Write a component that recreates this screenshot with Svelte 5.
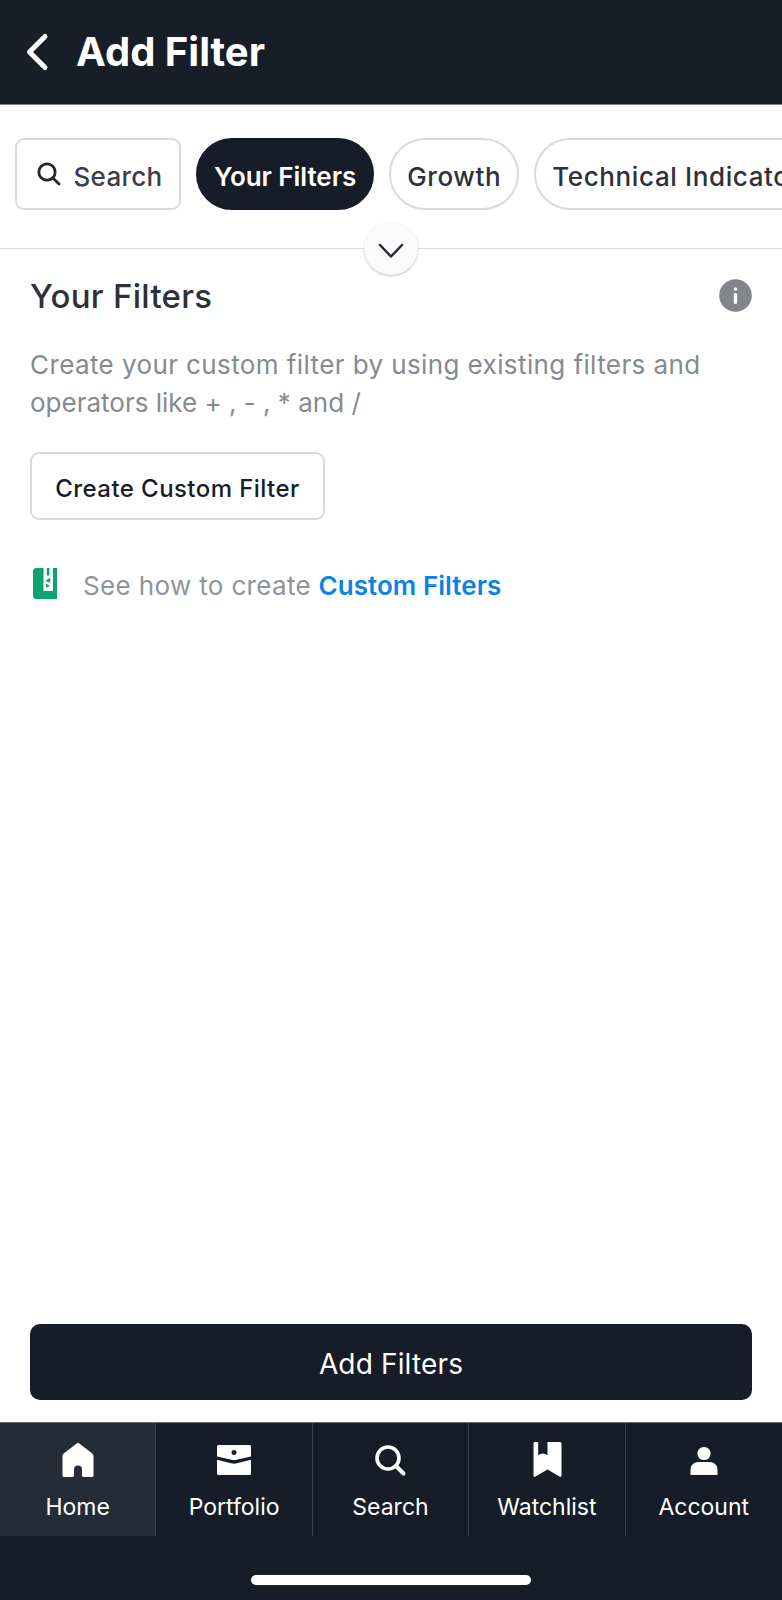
<script>
  let activeFilter = 'Your Filters', activeTab = 'Home';
  const filters = ['Your Filters', 'Growth', 'Technical Indicators'];
  const tabs = ['Home', 'Portfolio', 'Search', 'Watchlist', 'Account'];
</script>

<main class="screen">
  <header class="header">
    <svg class="back" width="24" height="40" viewBox="0 0 24 40"><path d="M20 4.500 4.500 20 20 35.500" /></svg>
    <h1>Add Filter</h1>
  </header>

  <div class="filter-bar">
    <button class="search">
      <svg width="24" height="24" viewBox="0 0 24 24"><circle cx="10" cy="10" r="8.200" /><path d="m16 16 6 6" /></svg>
      <span>Search</span>
    </button>
    {#each filters as name}
      <button class="chip" class:selected={name === activeFilter} on:click={() => activeFilter = name}>
        <span>{name}</span>
      </button>
    {/each}
    <button class="expand" aria-label="Show all filters">
      <svg width="28" height="18" viewBox="0 0 28 18"><path d="m3 3 11 11.500L25 3" /></svg>
    </button>
  </div>

  <section class="content">
    <div class="heading">
      <h2>Your Filters</h2>
      <svg width="33" height="33" viewBox="0 0 33 33">
        <circle cx="16.500" cy="16.500" r="16.300" fill="#82868c" />
        <circle cx="16.500" cy="10" r="1.700" fill="#fff" />
        <rect x="14.800" y="14" width="3.400" height="11" rx="1.600" fill="#fff" />
      </svg>
    </div>
    <p class="description"><span class="wide">Create your custom filter by using existing filters and</span><br />operators like + , - , * and /</p>
    <button class="create"><span>Create Custom Filter</span></button>
    <div class="help">
      <svg width="24" height="31" viewBox="0 0 24 31">
        <path fill="#09a56d" d="M3.500 0H10.500v23h9.500V0h4v31H3.500Q0 31 0 27.500v-24Q0 0 3.500 0Z" />
        <path fill="#09a56d" d="M13.800 0h2.600v7.500H13.800ZM17.200 9.500v5.300L12.300 13ZM12.800 15.500l4.200 2.200-3.700 2.300Z" />
      </svg>
      <p><span class="see">See how to create</span> <a href="#custom">Custom Filters</a></p>
    </div>
  </section>

  <div class="submit">
    <button><span>Add Filters</span></button>
  </div>

  <nav>
    {#each tabs as tab}
      <button class="tab" class:current={tab === activeTab} on:click={() => activeTab = tab}>
        <svg width="36" height="36" viewBox="0 0 36 36">
          {#if tab === 'Home'}
            <path d="M17 1.300q1-.8 2 0L32.300 11.600q1.200 1 1.200 2.500V33.500q0 1.500-1.500 1.500H23.500q-1.500 0-1.500-1.500V27.500q0-4-4-4t-4 4V33.500q0 1.500-1.500 1.500H4q-1.500 0-1.500-1.500V14.100q0-1.500 1.200-2.500Z" />
          {:else if tab === 'Portfolio'}
            <path fill-rule="evenodd" d="M2.500 3H33.500q1.500 0 1.500 1.500V14.500L20.500 17.800q-2.500.6-5 0L1 14.500V4.500Q1 3 2.500 3ZM18 8a2.500 2.500 0 1 0 0 5a2.500 2.500 0 1 0 0-5Z" />
            <path d="M1 17.800 15 21.300q3 .7 6 0L35 17.800V31.500q0 1.500-1.500 1.500H2.500Q1 33 1 31.500Z" />
          {:else if tab === 'Search'}
            <circle cx="16" cy="16" r="11" fill="none" stroke="#fff" stroke-width="3.600" />
            <path d="m24 24 7.500 7.500" fill="none" stroke="#fff" stroke-width="4" stroke-linecap="round" />
          {:else if tab === 'Watchlist'}
            <path d="M5.500 0H9.200V13.200q4.500-3.500 9.300 0V0H31Q32.500 0 32.500 1.500V33.500q0 2.200-2 1.100L18.500 27.500 6.500 34.600Q4.500 35.700 4.500 33.500V1.500Q4.500 0 5.500 0Z" />
          {:else}
            <circle cx="18" cy="11.500" r="6.600" />
            <path d="M4.500 33V28.500q0-8.500 8.500-8.500H23q8.500 0 8.500 8.500V33Z" />
          {/if}
        </svg>
        <span>{tab}</span>
      </button>
    {/each}
  </nav>
  <footer><div class="home-indicator"></div></footer>
</main>

<style>
  :global(body) { margin:0; background:#fff; }
  * { box-sizing:border-box; }
  .screen { display:flex; flex-direction:column; height:1600px; width:782px; overflow:hidden; background:#fff; font-family:Inter, sans-serif; color:#2c313a; }
  button { font:inherit; color:inherit; padding:0; margin:0; border:0; background:none; white-space:nowrap; display:flex; align-items:center; justify-content:center; flex:none; }
  svg { display:block; flex:none; }
  h1, h2, p { margin:0; }
  .header { height:105px; flex:none; display:flex; align-items:center; gap:27px; padding:0 0 1px 25px; background:#181e28; border-bottom:1px solid #7d8087; color:#fff; }
  .back path { fill:none; stroke:#fff; stroke-width:5; stroke-linecap:round; stroke-linejoin:round; }
  h1 { font-size:40px; line-height:48px; font-weight:700; letter-spacing:0; white-space:nowrap; }
  .filter-bar { position:relative; height:144px; flex:none; display:flex; align-items:flex-start; gap:15px; padding:33px 0 0 15px; border-bottom:1px solid #d8dadc; }
  .search, .chip { height:72px; border:2px solid #d8dadc; font-size:26px; font-weight:500; padding-top:4px; letter-spacing:.62px; }
  .search { width:166px; border-radius:9px; gap:12px; letter-spacing:.3px; padding-left:4px; color:#3a3f47; }
  .search svg { position:relative; top:-2px; fill:none; stroke:#202630; stroke-width:2.800; stroke-linecap:round; }
  .chip { border-radius:36px; padding-left:16px; padding-right:16px; }
  .chip.selected { background:#161d28; border-color:#161d28; color:#fff; font-weight:600; letter-spacing:-.05px; }
  .expand { position:absolute; left:364px; top:117px; width:54px; height:53px; border-radius:50%; background:#fafafa; box-shadow:0 1px 2px rgba(0,0,0,.25); }
  .expand svg { margin-top:5px; fill:none; stroke:#252a32; stroke-width:2.500; stroke-linecap:round; stroke-linejoin:round; }
  .content { flex:1; padding:22px 30px 0; }
  .heading { display:flex; justify-content:space-between; align-items:center; height:48px; }
  h2 { font-size:33px; line-height:48px; font-weight:500; letter-spacing:.3px; padding-top:1px; }
  .description { margin-top:27px; font-size:26px; line-height:38px; color:#858a8f; white-space:nowrap; }
  .wide { letter-spacing:.4px; }
  .create { margin-top:30px; width:295px; height:68px; border:2px solid #d8dadf; border-radius:9px; color:#181e28; font-size:24px; font-weight:500; padding-top:4px; letter-spacing:.43px; }
  .help { display:flex; align-items:center; gap:26px; margin-top:42px; padding-left:3px; font-size:26px; line-height:38px; color:#909397; white-space:nowrap; }
  .help p { padding-top:5px; margin-bottom:-1px; }
  .see { letter-spacing:.35px; }
  .help a { color:#0c83e2; font-weight:600; text-decoration:none; letter-spacing:.05px; }
  .submit { padding:0 30px 22px; }
  .submit button { width:100%; height:76px; border-radius:10px; background:#161d28; color:#fff; font-size:28px; padding-top:3px; letter-spacing:.15px; }
  nav { display:flex; height:114px; flex:none; background:#161d28; border-top:1px solid #686d74; }
  .tab { width:20%; flex-direction:column; justify-content:flex-start; gap:14px; padding-top:19px; border-right:1px solid #3d434c; color:#fff; font-size:23px; line-height:30px; }
  .tab:last-child { border-right:0; }
  .tab.current { background:#242d37; }
  .tab svg { fill:#fff; }
  footer { height:64px; flex:none; display:flex; justify-content:center; padding-top:39px; background:#161d28; }
  .home-indicator { width:280px; height:10px; border-radius:5px; background:#fff; }
</style>
